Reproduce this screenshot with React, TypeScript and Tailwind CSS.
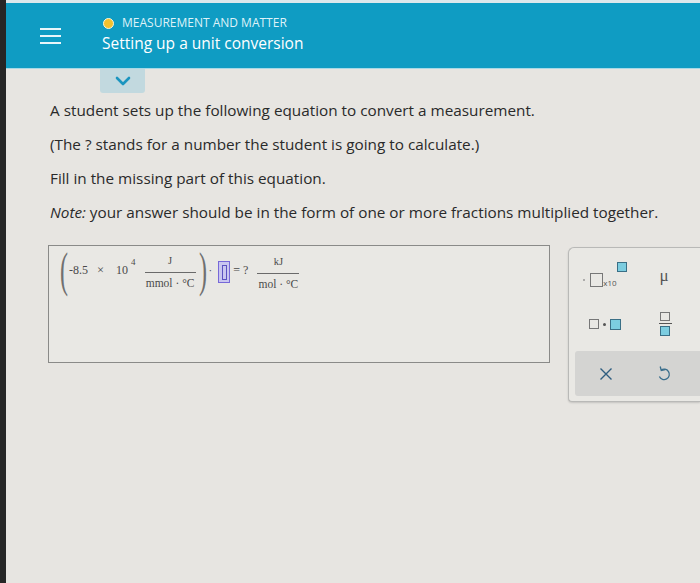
import React from "react";

const serif = { fontFamily: '"Liberation Serif", "Times New Roman", serif' };

function Frac({ top, bottom, w }: { top: React.ReactNode; bottom: React.ReactNode; w: string }) {
  return (
    <div className={`flex flex-col items-center ${w}`}>
      <div className="text-[10.5px] leading-[14px] h-[14px]">{top}</div>
      <div className="h-px w-full bg-[#6a6a6a] mt-[4px] mb-[4px]" />
      <div className="text-[11.5px] leading-[13px] whitespace-nowrap">{bottom}</div>
    </div>
  );
}

function Paren({ ch }: { ch: string }) {
  return (
    <span className="w-[8px] h-[46px] flex items-center justify-center overflow-visible">
      <span className="inline-block text-[48px] leading-[46px] text-[#707070] scale-x-[0.5]">{ch}</span>
    </span>
  );
}

export default function App() {
  return (
    <div
      className="w-[700px] h-[583px] flex bg-[#e7e5e1] overflow-hidden"
      style={{ fontFamily: '"Open Sans", "Noto Sans", sans-serif' }}
    >
      <div className="w-[6px] h-full bg-[#262626]" />
      <div className="flex-1 flex flex-col">
        <div className="h-[3px] bg-[#dce8ec]" />
        <div className="h-[65px] bg-[#0f9cc3] flex items-center">
          <div className="ml-[34px] flex flex-col gap-[5px] mr-[41px]">
            <div className="h-[2px] w-[21px] bg-[#e8f6fa]" />
            <div className="h-[2px] w-[21px] bg-[#e8f6fa]" />
            <div className="h-[2px] w-[21px] bg-[#e8f6fa]" />
          </div>
          <div className="flex flex-col mt-[-2px]">
            <div className="flex items-center ml-[1px]">
              <div className="w-[11px] h-[11px] rounded-full bg-[#f2c12e] border border-[#fff6d8]" />
              <span className="ml-[8px] text-[12px] leading-[16px] text-[#dff2f8]">MEASUREMENT AND MATTER</span>
            </div>
            <div className="text-[15.5px] leading-[22px] text-white mt-[1px]">Setting up a unit conversion</div>
          </div>
        </div>
        <div className="h-px bg-[#a7d9e6]" />
        <div className="ml-[94px] w-[45px] h-[24px] bg-[#c2d9df] rounded-b-[3px] flex items-center justify-center">
          <svg width="16" height="10" viewBox="0 0 16 10">
            <path d="M2 2 L8 8 L14 2" stroke="#1b95bf" strokeWidth="2.6" fill="none" strokeLinecap="round" strokeLinejoin="round" />
          </svg>
        </div>
        <div className="pl-[44px] text-[15.3px] text-[#2a2a2a] flex flex-col gap-[13px] mt-[7px] leading-[21px]">
          <p>A student sets up the following equation to convert a measurement.</p>
          <p>(The ? stands for a number the student is going to calculate.)</p>
          <p>Fill in the missing part of this equation.</p>
          <p>
            <i>Note:</i> your answer should be in the form of one or more fractions multiplied together.
          </p>
        </div>
        <div className="flex mt-[22px]">
          <div
            className="ml-[42px] w-[502px] h-[118px] border border-[#8a8a88] bg-[#e9e8e4] flex items-start pt-[1px] pl-[11px] text-[#4a4a4a]"
            style={serif}
          >
            <div className="flex items-center h-[46px]">
              <Paren ch="(" />
              <span className="ml-[1px] text-[12px]">-8.5</span>
              <span className="ml-[9px] text-[12.5px]">×</span>
              <span className="ml-[12px] text-[12px]">10</span>
              <span className="ml-[3px] text-[9px] -mt-[14px]">4</span>
              <div className="ml-[9px] mt-[3px]">
                <Frac w="w-[51px]" top="J" bottom="mmol · °C" />
              </div>
              <span className="ml-[3px]">
                <Paren ch=")" />
              </span>
              <span className="ml-[2px] text-[11px]">·</span>
              <div className="ml-[6px] mt-[4px] w-[12px] h-[22px] border border-[#7768d8] bg-[#c9c6f0] flex items-center justify-center">
                <div className="w-[5px] h-[15px] border border-[#5b52c0]" />
              </div>
              <span className="ml-[3px] text-[12px]">= ?</span>
              <div className="ml-[9px] mt-[5px]">
                <Frac w="w-[42px]" top="kJ" bottom="mol · °C" />
              </div>
            </div>
          </div>
          <div className="ml-[18px] mt-[2px] flex-1 h-[155px] border border-[#b9b9b7] border-r-0 rounded-tl-[6px] rounded-bl-[4px] bg-[#e9e8e4] flex flex-col shadow-[0_1px_2px_rgba(0,0,0,0.15)]">
            <div className="flex mt-[16px] h-[24px]">
              <div className="w-[72px] flex items-end justify-center h-[24px]">
                <span className="w-[2px] h-[2px] bg-[#999] rounded-full mr-[5px] mb-[7px]" />
                <div className="w-[13px] h-[14px] border border-[#777] mb-[1px]" />
                <span className="text-[8px] leading-[8px] text-[#555] mb-[1px]">x10</span>
                <div className="w-[10px] h-[10px] border border-[#3a6f86] bg-[#7ccde0] self-start -mt-[2px]" />
              </div>
              <div className="w-[46px] flex items-center justify-center h-[24px] text-[17px] text-[#555]" style={serif}>
                μ
              </div>
            </div>
            <div className="flex mt-[24px] h-[24px]">
              <div className="w-[72px] flex items-center justify-center gap-[4px]">
                <div className="w-[10px] h-[10px] border border-[#777]" />
                <span className="w-[3px] h-[3px] rounded-full bg-[#555]" />
                <div className="w-[11px] h-[11px] border border-[#3a6f86] bg-[#7ccde0]" />
              </div>
              <div className="w-[46px] flex flex-col items-center justify-center gap-[2px] pl-[2px]">
                <div className="w-[10px] h-[9px] border border-[#777]" />
                <div className="w-[13px] h-px bg-[#555]" />
                <div className="w-[10px] h-[10px] border border-[#3a6f86] bg-[#7ccde0]" />
              </div>
            </div>
            <div className="mt-[15px] h-[45px] bg-[#d4d4d2] flex ml-[6px] rounded-l-[3px]">
              <div className="w-[62px] flex items-center justify-center">
                <svg width="14" height="14" viewBox="0 0 14 14">
                  <path d="M1.5 1.5 L12.5 12.5 M12.5 1.5 L1.5 12.5" stroke="#2e5e80" strokeWidth="1.4" />
                </svg>
              </div>
              <div className="w-[54px] flex items-center justify-center">
                <svg width="14" height="17" viewBox="0 0 14 17">
                  <path d="M4 5.2 A5.2 5.2 0 1 1 2.4 11.5" stroke="#3a6e8c" strokeWidth="1.3" fill="none" />
                  <path d="M3.2 1.5 L4.3 5.4 L8.2 4.6" stroke="#3a6e8c" strokeWidth="1.3" fill="none" />
                </svg>
              </div>
            </div>
          </div>
        </div>
      </div>
    </div>
  );
}
